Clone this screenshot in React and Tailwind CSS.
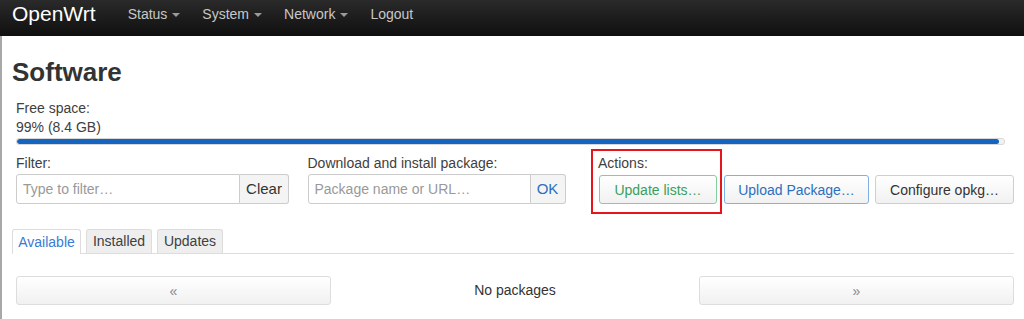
import React from 'react';

const Caret = () => (
  <span className="inline-block ml-[5px] w-0 h-0 border-x-[4px] border-t-[4px] border-x-transparent border-t-[#9a9a9a] align-middle" />
);

const Btn = ({ children, className = '' }) => (
  <button className={`h-[29px] rounded-[3px] border bg-gradient-to-b from-white to-[#f1f1f1] text-[14px] leading-none ${className}`}>
    {children}
  </button>
);

export default function App() {
  return (
    <div className="w-[1024px] h-[319px] overflow-hidden bg-white text-[14px] text-[#404040] font-['Liberation_Sans',Arial,sans-serif]">
      <nav className="h-[36px] bg-gradient-to-b from-[#2a2a2a] to-[#101010] flex items-start pl-[12px]">
        <span className="text-[21px] leading-[24px] mt-[2px] text-white">OpenWrt</span>
        <div className="flex ml-[32px] mt-[5px] gap-[22px] text-[#c8c8c8] leading-[18px]">
          <span>Status<Caret /></span>
          <span>System<Caret /></span>
          <span>Network<Caret /></span>
          <span>Logout</span>
        </div>
      </nav>

      <div className="border-l-2 border-[#a8a8a8] h-[283px] pl-[10px] pr-[10px]">
        <h1 className="pt-[21px] text-[26px] leading-[30px] font-bold text-[#333]">Software</h1>

        <div className="pl-[4px] mt-[12px]">
          <div className="leading-[19px]">Free space:</div>
          <div className="leading-[19px]">99% (8.4 GB)</div>
          <div className="mt-[1px] h-[7px] w-[989px] rounded-[3px] border border-[#d8d8d8] bg-[#f2f2f2] overflow-hidden">
            <div className="h-full bg-[#1565c0] rounded-[3px]" style={{ width: '99.5%' }} />
          </div>

          <div className="relative flex mt-[9px]">
            <div className="w-[292px]">
              <div className="leading-[19px]">Filter:</div>
              <div className="flex mt-[1px]">
                <div className="w-[224px] h-[30px] border border-[#ccc] rounded-l-[3px] px-[6px] flex items-center text-[#999]">Type to filter…</div>
                <div className="w-[49px] h-[30px] border border-l-0 border-[#ccc] rounded-r-[3px] bg-[#f4f4f4] flex items-center justify-center text-[15px] text-[#333]">Clear</div>
              </div>
            </div>
            <div className="w-[291px]">
              <div className="leading-[19px]">Download and install package:</div>
              <div className="flex mt-[1px]">
                <div className="w-[223px] h-[30px] border border-[#ccc] rounded-l-[3px] px-[6px] flex items-center text-[#999]">Package name or URL…</div>
                <div className="w-[35px] h-[30px] border border-l-0 border-[#ccc] rounded-r-[3px] bg-[#f4f4f4] flex items-center justify-center text-[15px] text-[#2d6fbf]">OK</div>
              </div>
            </div>
            <div className="flex-1">
              <div className="leading-[19px]">Actions:</div>
              <div className="flex mt-[2px] pl-[1px]">
                <Btn className="w-[118px] border-[#7fd09a] text-[#3aa05c]">Update lists…</Btn>
                <Btn className="w-[145px] ml-[7px] border-[#7fb0e6] text-[#2d6fbf]">Upload Package…</Btn>
                <Btn className="w-[139px] ml-[6px] border-[#cfcfcf] text-[#333]">Configure opkg…</Btn>
              </div>
            </div>
            <div className="absolute left-[575px] top-[-5px] w-[131px] h-[65px] border-2 border-[#e8141c] pointer-events-none" />
          </div>
        </div>

        <div className="mt-[25px] flex items-end border-b border-[#ddd] h-[25px]">
          <div className="h-[25px] w-[69px] -mb-px border border-b-0 border-[#ddd] rounded-t-[3px] bg-white flex items-center justify-center text-[#3a7bd5]">Available</div>
          <div className="h-[24px] w-[66px] ml-[5px] border border-b-0 border-[#ddd] rounded-t-[3px] bg-[#eee] flex items-center justify-center">Installed</div>
          <div className="h-[24px] w-[66px] ml-[5px] border border-b-0 border-[#ddd] rounded-t-[3px] bg-[#eee] flex items-center justify-center">Updates</div>
        </div>

        <div className="flex items-center mt-[22px] pl-[4px]">
          <Btn className="w-[315px] border-[#ddd] text-[#888]">«</Btn>
          <div className="flex-1 text-center text-[#333]">No packages</div>
          <Btn className="w-[315px] border-[#ddd] text-[#888]">»</Btn>
        </div>
      </div>
    </div>
  );
}
